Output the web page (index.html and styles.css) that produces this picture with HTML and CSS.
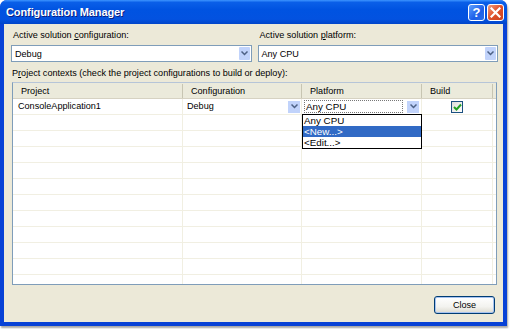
FILE: index.html
```html
<!DOCTYPE html>
<html>
<head>
<meta charset="utf-8">
<link rel="stylesheet" href="styles.css">
</head>
<body>
<div class="window">
  <div class="titlebar">
    <span class="title">Configuration Manager</span>
    <div class="tbtns">
      <span class="tbtn help">?</span>
      <span class="tbtn close"><svg width="11" height="11" viewBox="0 0 11 11"><path d="M1.5 1.5 L9.5 9.5 M9.5 1.5 L1.5 9.5" stroke="#fff" stroke-width="2.2" stroke-linecap="square"/></svg></span>
    </div>
  </div>
  <div class="content">
    <div class="toprow">
      <div class="field">
        <label>Active solution <u>c</u>onfiguration:</label>
        <div class="combo"><span class="val">Debug</span><span class="ddbtn"><svg width="7" height="5" viewBox="0 0 7 5"><path d="M0.5 0.5 L3.5 3.5 L6.5 0.5" fill="none" stroke="#4d6185" stroke-width="1.5"/></svg></span></div>
      </div>
      <div class="field">
        <label>Active solution <u>p</u>latform:</label>
        <div class="combo"><span class="val">Any CPU</span><span class="ddbtn"><svg width="7" height="5" viewBox="0 0 7 5"><path d="M0.5 0.5 L3.5 3.5 L6.5 0.5" fill="none" stroke="#4d6185" stroke-width="1.5"/></svg></span></div>
      </div>
    </div>
    <div class="ctx">P<u>r</u>oject contexts (check the project configurations to build or deploy):</div>
    <div class="grid">
      <div class="hdr">
        <div class="hc c1">Project</div>
        <div class="hc c2">Configuration</div>
        <div class="hc c3">Platform</div>
        <div class="hc c4">Build</div>
        <div class="hc c5"></div>
      </div>
      <div class="row">
        <div class="cell c1">ConsoleApplication1</div>
        <div class="cell c2 cfg">Debug<span class="cellbtn"><svg width="7" height="5" viewBox="0 0 7 5"><path d="M0.5 0.5 L3.5 3.5 L6.5 0.5" fill="none" stroke="#4d6185" stroke-width="1.5"/></svg></span></div>
        <div class="cell c3 plat"><span class="platbox">Any CPU</span><span class="cellbtn"><svg width="7" height="5" viewBox="0 0 7 5"><path d="M0.5 0.5 L3.5 3.5 L6.5 0.5" fill="none" stroke="#4d6185" stroke-width="1.5"/></svg></span>
          <div class="dropdown">
            <div class="opt">Any CPU</div>
            <div class="opt sel">&lt;New...&gt;</div>
            <div class="opt">&lt;Edit...&gt;</div>
          </div>
        </div>
        <div class="cell c4 chk"><span class="checkbox"><svg width="9" height="8" viewBox="0 0 9 8"><path d="M1 4 L3.5 6.5 L8 1.5" fill="none" stroke="#21a121" stroke-width="2"/></svg></span></div>
        <div class="cell c5"></div>
      </div>
      <div class="row"><div class="cell c1"></div><div class="cell c2"></div><div class="cell c3"></div><div class="cell c4"></div><div class="cell c5"></div></div>
      <div class="row"><div class="cell c1"></div><div class="cell c2"></div><div class="cell c3"></div><div class="cell c4"></div><div class="cell c5"></div></div>
      <div class="row"><div class="cell c1"></div><div class="cell c2"></div><div class="cell c3"></div><div class="cell c4"></div><div class="cell c5"></div></div>
      <div class="row"><div class="cell c1"></div><div class="cell c2"></div><div class="cell c3"></div><div class="cell c4"></div><div class="cell c5"></div></div>
      <div class="row"><div class="cell c1"></div><div class="cell c2"></div><div class="cell c3"></div><div class="cell c4"></div><div class="cell c5"></div></div>
      <div class="row"><div class="cell c1"></div><div class="cell c2"></div><div class="cell c3"></div><div class="cell c4"></div><div class="cell c5"></div></div>
      <div class="row"><div class="cell c1"></div><div class="cell c2"></div><div class="cell c3"></div><div class="cell c4"></div><div class="cell c5"></div></div>
      <div class="row"><div class="cell c1"></div><div class="cell c2"></div><div class="cell c3"></div><div class="cell c4"></div><div class="cell c5"></div></div>
      <div class="row"><div class="cell c1"></div><div class="cell c2"></div><div class="cell c3"></div><div class="cell c4"></div><div class="cell c5"></div></div>
      <div class="row"><div class="cell c1"></div><div class="cell c2"></div><div class="cell c3"></div><div class="cell c4"></div><div class="cell c5"></div></div>
      <div class="row"><div class="cell c1"></div><div class="cell c2"></div><div class="cell c3"></div><div class="cell c4"></div><div class="cell c5"></div></div>
      <div class="row"><div class="cell c1"></div><div class="cell c2"></div><div class="cell c3"></div><div class="cell c4"></div><div class="cell c5"></div></div>
    </div>
    <div class="footer">
      <button class="btn">Close</button>
    </div>
  </div>
</div>
</body>
</html>
```

FILE: styles.css
```css
* { box-sizing: border-box; }
html, body { margin: 0; padding: 0; background: #ffffff; }
body {
  width: 512px; height: 329px; overflow: hidden;
  font-family: "Liberation Sans", Arial, sans-serif;
  font-size: 9.1px; color: #000;
}
u { text-decoration: underline; }
.window {
  width: 507px; height: 326px;
  display: flex; flex-direction: column;
  background: #0842d6;
  border-radius: 7px 7px 0 0;
  box-shadow: 1px 2px 2px rgba(0,0,0,0.35);
  overflow: hidden;
}
.titlebar {
  height: 24px; flex: none;
  display: flex; align-items: center; justify-content: space-between;
  padding: 0 3px 0 6px;
  background: linear-gradient(to bottom, #3d95ff 0%, #0a5fe8 10%, #0053e1 40%, #0352e0 80%, #0145c9 100%);
}
.title {
  color: #fff; font-weight: bold; font-size: 11px;
  font-family: "Liberation Sans", Arial, sans-serif;
  letter-spacing: -0.1px;
  text-shadow: 1px 1px 0 #0a1e80;
}
.tbtns { display: flex; gap: 2px; margin-top: 0; }
.tbtn {
  width: 17px; height: 17px;
  border: 1px solid #fff; border-radius: 3px;
  display: flex; align-items: center; justify-content: center;
  color: #fff; font-weight: bold; font-size: 13px;
}
.help { background: linear-gradient(135deg, #5fa0ff, #1c5ee8 60%, #2b6ee8); }
.close { background: linear-gradient(135deg, #f0a080, #e0502a 50%, #c9431f); }
.content {
  flex: 1;
  margin: 0 4px 4px 4px;
  background: #ece9d8;
  display: flex; flex-direction: column;
  padding: 4px 5px 0 7px;
}
.toprow { display: flex; gap: 6px; }
.field { flex: 1; display: flex; flex-direction: column; }
.field label { height: 15px; line-height: 15px; padding-left: 2px; }
.combo {
  margin-top: 2px;
  height: 17px;
  border: 1px solid #7f9db9; background: #fff;
  display: flex; align-items: center; justify-content: space-between;
  padding: 1px 1px 1px 3px;
}
.ddbtn {
  width: 11px; height: 13px;
  background: #c1d3fb; border-radius: 1px;
  display: flex; align-items: center; justify-content: center;
}
.ctx { margin-top: 4px; height: 14px; line-height: 14px; padding-left: 1px; }
.grid {
  margin-top: 2px; margin-right: 1px; margin-left: 1px;
  height: 203px;
  border: 1px solid #7f9db9; border-top-color: #b6c5d8;
  background: #fff;
  overflow: hidden;
}
.hdr { display: flex; height: 16px; background: #ebeadb; border-bottom: 1px solid #d6d2c2; }
.hc {
  line-height: 15px; padding-left: 8px;
  border-right: 1px solid #c7c5b2;
  margin: 1px 0 0;
}
.c1 { width: 170px; flex: none; }
.c2 { width: 119px; flex: none; }
.c3 { width: 120px; flex: none; }
.c4 { width: 71px; flex: none; }
.c5 { flex: 1; border-right: none; }
.row { display: flex; height: 16px; border-bottom: 1px solid #f1efe2; }
.cell { border-right: 1px solid #f1efe2; line-height: 15px; padding-left: 5px; position: relative; }
.cell.c5 { border-right: none; }
.cfg { display: flex; justify-content: space-between; align-items: center; padding-right: 1px; padding-left: 4px; }
.cellbtn {
  width: 12px; height: 12px; background: #c1d3fb;
  display: flex; align-items: center; justify-content: center;
}
.plat { display: flex; align-items: center; padding-left: 2px; padding-right: 2px; gap: 4px; }
.platbox {
  width: 100px; height: 13px; line-height: 11px;
  border: 1px dotted #777; padding-left: 1px; font-size: 9.8px;
}
.dropdown {
  position: absolute; left: 0; top: 15px;
  width: 120px; height: 35px;
  border: 1px solid #000; background: #fff;
  z-index: 5; padding: 0;
}
.opt { height: 11px; line-height: 11px; padding-left: 1px; font-size: 9.8px; }
.opt.sel { background: #316ac5; color: #fff; }
.chk { display: flex; justify-content: center; align-items: center; padding-left: 0; }
.checkbox {
  width: 12px; height: 12px; border: 1px solid #1c5180; background: linear-gradient(135deg, #dcdcd7, #fff);
  display: flex; align-items: center; justify-content: center;
}
.footer { display: flex; justify-content: flex-end; padding-top: 11px; padding-right: 3px; }
.btn {
  width: 61px; height: 18px;
  font-family: "Liberation Sans", Arial, sans-serif; font-size: 9.1px;
  border: 1px solid #003c74; border-radius: 3px;
  background: linear-gradient(to bottom, #fff 0%, #f3f3ef 60%, #dcdad0 100%);
  box-shadow: inset 0 0 0 1px #a7c3f0;
  padding: 0;
}
```
